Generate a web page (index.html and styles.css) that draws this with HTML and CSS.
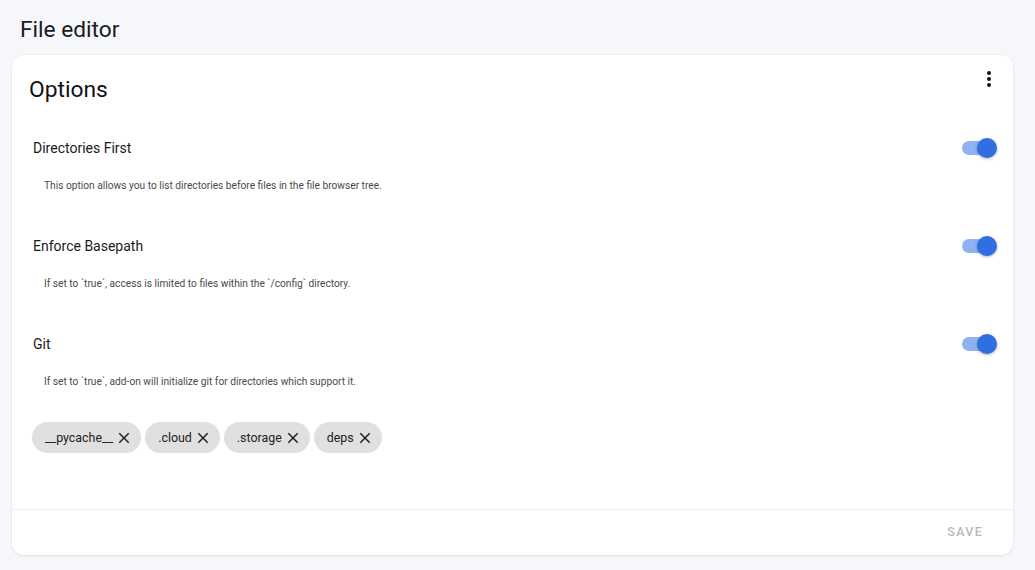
FILE: index.html
```html
<!DOCTYPE html>
<html lang="en">

<head>
    <meta charset="UTF-8" />
    <meta name="viewport" content="width=device-width, initial-scale=1.0" />
    <title>File editor</title>
    <link rel="stylesheet" href="styles.css">
</head>

<body>
    <div class="page">
        <h1 class="page-title">File editor</h1>

        <div class="card">
            <div class="card-header">
                <h2>Options</h2>
                <button class="menu-btn" aria-label="Menu">
                    <svg viewBox="0 0 24 24" width="24" height="24">
                        <path d="M12,16A2,2 0 0,1 14,18A2,2 0 0,1 12,20A2,2 0 0,1 10,18A2,2 0 0,1 12,16M12,10A2,2 0 0,1 14,12A2,2 0 0,1 12,14A2,2 0 0,1 10,12A2,2 0 0,1 12,10M12,4A2,2 0 0,1 14,6A2,2 0 0,1 12,8A2,2 0 0,1 10,6A2,2 0 0,1 12,4Z" />
                    </svg>
                </button>
            </div>

            <div class="card-content">
                <div class="option">
                    <div class="option-row">
                        <span class="option-label">Directories First</span>
                        <span class="switch"><span class="track"></span><span class="thumb"></span></span>
                    </div>
                    <p class="option-desc">This option allows you to list directories before files in the file browser tree.</p>
                </div>

                <div class="option">
                    <div class="option-row">
                        <span class="option-label">Enforce Basepath</span>
                        <span class="switch"><span class="track"></span><span class="thumb"></span></span>
                    </div>
                    <p class="option-desc">If set to `true`, access is limited to files within the `/config` directory.</p>
                </div>

                <div class="option">
                    <div class="option-row">
                        <span class="option-label">Git</span>
                        <span class="switch"><span class="track"></span><span class="thumb"></span></span>
                    </div>
                    <p class="option-desc">If set to `true`, add-on will initialize git for directories which support it.</p>
                </div>

                <div class="chips">
                    <span class="chip">__pycache__<svg class="chip-x" viewBox="0 0 24 24"><path d="M19,6.41L17.59,5L12,10.59L6.41,5L5,6.41L10.59,12L5,17.59L6.41,19L12,13.41L17.59,19L19,17.59L13.41,12L19,6.41Z" /></svg></span>
                    <span class="chip">.cloud<svg class="chip-x" viewBox="0 0 24 24"><path d="M19,6.41L17.59,5L12,10.59L6.41,5L5,6.41L10.59,12L5,17.59L6.41,19L12,13.41L17.59,19L19,17.59L13.41,12L19,6.41Z" /></svg></span>
                    <span class="chip">.storage<svg class="chip-x" viewBox="0 0 24 24"><path d="M19,6.41L17.59,5L12,10.59L6.41,5L5,6.41L10.59,12L5,17.59L6.41,19L12,13.41L17.59,19L19,17.59L13.41,12L19,6.41Z" /></svg></span>
                    <span class="chip">deps<svg class="chip-x" viewBox="0 0 24 24"><path d="M19,6.41L17.59,5L12,10.59L6.41,5L5,6.41L10.59,12L5,17.59L6.41,19L12,13.41L17.59,19L19,17.59L13.41,12L19,6.41Z" /></svg></span>
                </div>
            </div>

            <div class="card-actions">
                <button class="btn-save" disabled>Save</button>
            </div>
        </div>
    </div>
</body>

</html>
```

FILE: styles.css
```css
*,
*::before,
*::after {
    box-sizing: border-box;
    margin: 0;
    padding: 0;
}

html,
body {
    height: 100%;
    background: #f6f7fb;
    font-family: Roboto, 'Noto Sans', sans-serif;
    color: #141414;
}

.page {
    padding: 16px 22px 0 12px;
}

.page-title {
    font-size: 22.7px;
    font-weight: 400;
    line-height: 28px;
    padding-left: 8px;
    margin-bottom: 11px;
    color: #1a1a1a;
}

.card {
    background: #fff;
    border-radius: 12px;
    height: 500px;
    display: flex;
    flex-direction: column;
    box-shadow: 0 1px 3px rgba(0, 0, 0, 0.08), 0 0 0 1px rgba(0, 0, 0, 0.02);
}

.card-header {
    display: flex;
    justify-content: space-between;
    align-items: flex-start;
    padding: 19px 12px 0 17px;
}

.card-header h2 {
    font-size: 22.8px;
    font-weight: 400;
    line-height: 32px;
    color: #111;
}

.menu-btn {
    border: none;
    background: none;
    width: 24px;
    height: 24px;
    margin-top: -7px;
    cursor: pointer;
}

.menu-btn svg {
    fill: #111;
}

.card-content {
    flex: 1;
    padding: 22px 16px 0 20px;
}

.option {
    margin-bottom: 32px;
}

.option:last-of-type {
    margin-bottom: 30px;
}

.option-row {
    display: flex;
    justify-content: space-between;
    align-items: center;
    height: 40px;
}

.option-label {
    font-size: 14px;
    color: #1a1a1a;
    padding-left: 1px;
}

.switch {
    position: relative;
    width: 36px;
    height: 20px;
}

.switch .track {
    position: absolute;
    left: 1px;
    top: 3px;
    width: 30px;
    height: 14px;
    border-radius: 7px;
    background: #8fb2f0;
}

.switch .thumb {
    position: absolute;
    right: 0;
    top: 0;
    width: 20px;
    height: 20px;
    border-radius: 50%;
    background: #2f6fe2;
    box-shadow: 0 1px 3px rgba(0, 0, 0, 0.3);
}

.option-desc {
    font-size: 10.2px;
    color: #4a4a4a;
    padding-left: 12px;
    margin-top: 10px;
    line-height: 16px;
}

.chips {
    display: flex;
    gap: 4px;
}

.chip {
    display: inline-flex;
    align-items: center;
    height: 31px;
    padding: 0 8px 0 13px;
    border-radius: 16px;
    background: #e0e0e0;
    font-size: 12.4px;
    color: #222;
}

.chip-x {
    width: 18px;
    height: 18px;
    margin-left: 2px;
    fill: #222;
}

.card-actions {
    display: flex;
    justify-content: flex-end;
    border-top: 1px solid #eeeff3;
    padding: 8px 22px 10px;
}

.btn-save {
    border: none;
    background: none;
    font-family: Roboto, sans-serif;
    font-size: 12.5px;
    font-weight: 500;
    letter-spacing: 1.3px;
    text-transform: uppercase;
    color: #b7bac1;
    padding: 6px 8px;
}
```
